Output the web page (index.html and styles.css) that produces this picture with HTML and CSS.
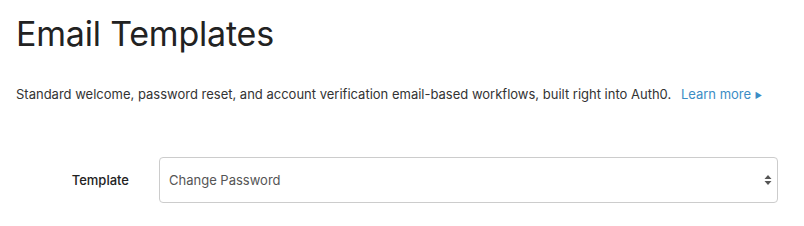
FILE: index.html
```html
<!DOCTYPE html>
<html lang="en">
<head>
    <meta charset="UTF-8">
    <title>Email Templates</title>
    <link rel="stylesheet" href="styles.css">
</head>
<body>
    <div class="page">
        <h1 class="title">Email Templates</h1>
        <p class="intro">
            Standard welcome, password reset, and account verification email-based workflows, built right into Auth0.
            <a class="learn-more" href="#">Learn more <span class="arrow">&#9654;</span></a>
        </p>

        <form class="template-form">
            <label class="field-label" for="template">Template</label>
            <div class="select-wrap">
                <select id="template" class="select">
                    <option>Change Password</option>
                    <option>Verification Email</option>
                    <option>Welcome Email</option>
                </select>
                <svg class="select-arrows" width="8" height="12" viewBox="0 0 8 12">
                    <path d="M4 1 L7.5 5 H0.5 Z" fill="#555"/>
                    <path d="M4 11 L7.5 7 H0.5 Z" fill="#555"/>
                </svg>
            </div>
        </form>
    </div>
</body>
</html>
```

FILE: styles.css
```css
body {
    margin: 0;
    background: #fff;
    font-family: 'Inter', 'Noto Sans', sans-serif;
    color: #333;
}

.page {
    padding: 13px 26px 0 16px;
}

.title {
    margin: 0;
    font-size: 34px;
    font-weight: 400;
    color: #222;
    letter-spacing: -0.2px;
    line-height: 42px;
}

.intro {
    margin: 30px 0 0;
    font-size: 13px;
    line-height: 18px;
    color: #333;
}

.learn-more {
    margin-left: 6px;
    color: #3c8dc5;
    text-decoration: none;
}

.arrow {
    font-size: 8px;
    vertical-align: 1px;
}

.template-form {
    display: grid;
    grid-template-columns: 113px 1fr;
    column-gap: 30px;
    align-items: center;
    margin-top: 53px;
}

.field-label {
    text-align: right;
    font-size: 13px;
    font-weight: 500;
    color: #222;
}

.select-wrap {
    position: relative;
}

.select {
    display: block;
    width: 100%;
    height: 46px;
    padding: 0 30px 0 9px;
    border: 1px solid #ccc;
    border-radius: 4px;
    background: #fff;
    font-family: inherit;
    font-size: 13px;
    color: #555;
    appearance: none;
    -webkit-appearance: none;
    box-sizing: border-box;
}

.select-arrows {
    position: absolute;
    right: 6px;
    top: 17px;
    pointer-events: none;
}
```
